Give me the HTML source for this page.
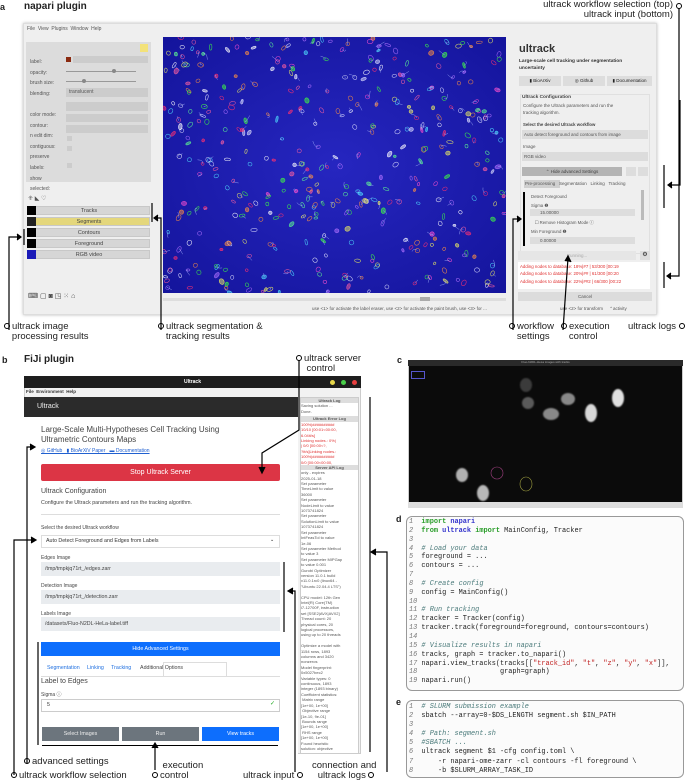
<!DOCTYPE html>
<html><head><meta charset="utf-8"><style>
*{margin:0;padding:0;box-sizing:border-box}
body{width:685px;height:781px;background:#fff;position:relative;overflow:hidden;font-family:"Liberation Sans",sans-serif;color:#222}
.a{position:absolute}
.t{position:absolute;white-space:nowrap}
.lbl{font-size:9.5px;color:#222;line-height:10px}
.np{font-size:5px;color:#555}
.row{position:absolute;left:28px;width:122px;height:9px;background:#d6d6d6;border:1px solid #c8c8c8;font-size:5.5px;text-align:center;line-height:8px;color:#444}
.thumb{position:absolute;left:-2px;top:-1px;width:9px;height:9px;background:#000}
.code{font-family:"Liberation Mono",monospace;font-size:6.9px;line-height:8.85px;white-space:pre;color:#222}
.ln{color:#777;font-style:italic}
.kw{color:#2a9d2a;font-weight:bold}
.kb{color:#3333cc;font-weight:bold}
.cm{color:#4a7a7a;font-style:italic}
.st{color:#c02020}
.circ{display:inline-block;width:6px;height:6px;border:1.3px solid #000;border-radius:50%;margin-right:2px;vertical-align:0}
</style></head><body>

<div class="t" style="left:0;top:2px;font-size:9px;font-weight:bold">a</div>
<div class="t" style="left:24px;top:1px;font-size:10px;font-weight:bold">napari plugin</div>
<div class="t lbl" style="right:12px;top:0;text-align:right">ultrack workflow selection (top)<br>ultrack input (bottom)</div>
<div class="a circ" style="left:676px;top:3px"></div>

<div class="a" style="left:23px;top:23px;width:634px;height:292px;background:#efefef;border:1px solid #ddd;box-shadow:0 0 3px #bbb"></div>
<div class="t np" style="left:27px;top:26px">File &nbsp;View &nbsp;Plugins &nbsp;Window &nbsp;Help</div>
<div class="a" style="left:26px;top:42px;width:125px;height:140px;background:#dcdcdc"></div>
<div class="a" style="left:140px;top:44px;width:8px;height:8px;background:#f3e27a"></div>
<div class="t np" style="left:30px;top:57px;line-height:10.6px">label:<br>opacity:<br>brush size:<br>blending:<br><br>color mode:<br>contour:<br>n edit dim:<br>contiguous:<br>preserve<br>labels:<br>show<br>selected:</div>
<div class="a" style="left:66px;top:57px;width:5px;height:5px;background:#8a2a10"></div>
<div class="a" style="left:73px;top:56px;width:75px;height:7px;background:#ccc"></div>
<div class="a" style="left:66px;top:71px;width:70px;height:1px;background:#999"></div>
<div class="a" style="left:112px;top:69px;width:4px;height:4px;border-radius:50%;background:#888"></div>
<div class="a" style="left:66px;top:81px;width:70px;height:1px;background:#999"></div>
<div class="a" style="left:82px;top:79px;width:4px;height:4px;border-radius:50%;background:#888"></div>
<div class="a" style="left:66px;top:88px;width:82px;height:9px;background:#ccc;font-size:5px;color:#555;padding-left:3px;line-height:9px">translucent</div>
<div class="a" style="left:66px;top:102px;width:82px;height:9px;background:#ccc"></div>
<div class="a" style="left:66px;top:114px;width:82px;height:8px;background:#ccc"></div>
<div class="a" style="left:66px;top:125px;width:82px;height:8px;background:#ccc"></div>
<div class="a" style="left:67px;top:136px;width:5px;height:5px;background:#ccc"></div>
<div class="a" style="left:67px;top:146px;width:5px;height:5px;background:#ccc"></div>
<div class="a" style="left:67px;top:163px;width:5px;height:5px;background:#ccc"></div>
<div class="a" style="left:28px;top:195px;width:30px;height:6px;font-size:6px;color:#555">⁜ ◣ ♡</div>
<div class="row" style="top:206px"><div class="thumb"></div>Tracks</div>
<div class="row" style="top:217px;background:#e4d77c"><div class="thumb" style="background:#222"></div>Segments</div>
<div class="row" style="top:228px"><div class="thumb"></div>Contours</div>
<div class="row" style="top:239px"><div class="thumb"></div>Foreground</div>
<div class="row" style="top:250px"><div class="thumb" style="background:#1a1ab8"></div>RGB video</div>
<div class="t" style="left:28px;top:292px;font-size:7px;color:#444">⌨ ▢ ◙ ◳ ⁙ ⌂</div>

<svg class="a" style="left:163px;top:37px" width="343" height="256" id="cv">
<defs><radialGradient id="bg" cx="50%" cy="50%" r="70%"><stop offset="0" stop-color="#2626c0"/><stop offset="1" stop-color="#14149c"/></radialGradient></defs>
<rect width="343" height="256" fill="url(#bg)"/></svg>
<div class="a" style="left:163px;top:298px;width:343px;height:3px;background:#ddd"></div>
<div class="a" style="left:420px;top:297px;width:10px;height:4px;background:#aaa"></div>
<div class="t np" style="left:312px;top:306px;font-size:4.5px">use &lt;1&gt; for activate the label eraser, use &lt;2&gt; for activate the paint brush, use &lt;3&gt; for ...</div>
<div class="t np" style="left:560px;top:306px;font-size:4.5px">use &lt;2&gt; for transform &nbsp; &nbsp; ⌃activity</div>

<div class="t" style="left:519px;top:43px;font-size:11px;font-weight:bold;color:#333">ultrack</div>
<div class="t" style="left:519px;top:59px;font-size:4.8px;font-weight:bold;color:#333;line-height:6.5px">Large-scale cell tracking under segmentation<br>uncertainty</div>
<div class="a" style="left:519px;top:76px;width:42px;height:10px;background:#ddd;font-size:4.5px;text-align:center;line-height:10px">▮ BioArXiv</div>
<div class="a" style="left:563px;top:76px;width:42px;height:10px;background:#ddd;font-size:4.5px;text-align:center;line-height:10px">◎ Github</div>
<div class="a" style="left:607px;top:76px;width:45px;height:10px;background:#ddd;font-size:4.5px;text-align:center;line-height:10px">▮ Documentation</div>
<div class="a" style="left:520px;top:94px;width:130px;height:160px;border:1px solid #e0e0e0"></div>
<div class="t" style="left:522px;top:95px;font-size:4.8px;font-weight:bold;color:#444">Ultrack Configuration</div>
<div class="t np" style="left:523px;top:103px;line-height:6.5px;font-size:4.5px">Configure the Ultrack parameters and run the<br>tracking algorithm.</div>
<div class="t" style="left:523px;top:122px;font-size:4.3px;font-weight:bold;color:#444">Select the desired Ultrack workflow</div>
<div class="a" style="left:522px;top:130px;width:126px;height:9px;background:#dcdcdc;font-size:4.5px;color:#555;padding-left:2px;line-height:9px">Auto detect foreground and contours from image</div>
<div class="t np" style="left:523px;top:144px;font-size:4.5px">Image</div>
<div class="a" style="left:522px;top:152px;width:126px;height:9px;background:#dcdcdc;font-size:4.5px;color:#555;padding-left:2px;line-height:9px">RGB video</div>
<div class="a" style="left:522px;top:167px;width:100px;height:9px;background:#b4b4b4;font-size:4.5px;color:#444;text-align:center;line-height:9px">⌃ Hide advanced Settings</div>
<div class="a" style="left:626px;top:167px;width:10px;height:9px;background:#ddd"></div>
<div class="a" style="left:638px;top:167px;width:10px;height:9px;background:#ddd"></div>
<div class="a" style="left:524px;top:180px;width:36px;height:8px;background:#cfcfcf"></div>
<div class="t np" style="left:525px;top:181px;font-size:4.5px">Pre-processing &nbsp; Segmentation &nbsp; Linking &nbsp; Tracking</div>
<div class="a" style="left:523px;top:192px;width:2px;height:54px;background:#000"></div>
<div class="t np" style="left:531px;top:193px;font-size:4.3px;line-height:8.8px">Detect Foreground<br>Sigma ❶<br><br>&nbsp;&nbsp;&nbsp;☐ Remove Histogram Mode ⓘ<br>Min Foreground ❶</div>
<div class="a" style="left:530px;top:209px;width:105px;height:7px;background:#ddd;font-size:4.5px;color:#555;padding-left:10px;line-height:7px">15.00000</div>
<div class="a" style="left:530px;top:237px;width:105px;height:7px;background:#ddd;font-size:4.5px;color:#555;padding-left:10px;line-height:7px">0.00000</div>
<div class="a" style="left:641px;top:190px;width:3px;height:30px;background:#bbb"></div>
<div class="a" style="left:518px;top:251px;width:118px;height:9px;background:#e6e6e6;font-size:4.5px;color:#aaa;text-align:center;line-height:9px">Running...</div>
<div class="a" style="left:640px;top:251px;width:10px;height:9px;background:#ddd;font-size:6px;text-align:center;line-height:9px">⚙</div>
<div class="a" style="left:518px;top:262px;width:132px;height:27px;background:#fff;font-size:4.4px;color:#e03030;line-height:7.4px;padding:1px 2px;overflow:hidden">Adding nodes to database: 18%|#7 | 53/300 [00:19<br>Adding nodes to database: 20%|## | 61/300 [00:20<br>Adding nodes to database: 22%|##2 | 66/300 [00:22</div>
<div class="a" style="left:518px;top:292px;width:134px;height:9px;background:#dcdcdc;font-size:4.5px;color:#555;text-align:center;line-height:9px">Cancel</div>

<svg class="a" style="left:0;top:0" width="685" height="340" fill="none" stroke="#000" stroke-width="1.2">
<path d="M9 330 V237 H20"/><path d="M17 234 L21 237 L17 240" fill="#000"/>
<path d="M24 229 V245"/><path d="M152 203 V222"/>
<path d="M161 330 V218 H155"/><path d="M158 215 L154 218 L158 221" fill="#000"/>
<path d="M513 330 V219 H520"/><path d="M517 216 L521 219 L517 222" fill="#000"/>
<path d="M563 330 L568 258"/><path d="M565 261 L568 256 L571 262" fill="#000"/>
<path d="M679 8 V276 H668"/><path d="M671 273 L667 276 L671 279" fill="#000"/>
<path d="M664 262 V288"/><path d="M680 100 V185 H669"/><path d="M672 182 L668 185 L672 188" fill="#000"/><path d="M664 165 V208"/>
</svg>
<div class="t lbl" style="left:4px;top:322px"><span class="circ"></span>ultrack image<br>&nbsp;&nbsp;&nbsp;processing results</div>
<div class="t lbl" style="left:158px;top:322px"><span class="circ"></span>ultrack segmentation &amp;<br>&nbsp;&nbsp;&nbsp;tracking results</div>
<div class="t lbl" style="left:509px;top:322px"><span class="circ"></span>workflow<br>&nbsp;&nbsp;&nbsp;settings</div>
<div class="t lbl" style="left:561px;top:322px"><span class="circ"></span>execution<br>&nbsp;&nbsp;&nbsp;control</div>
<div class="t lbl" style="left:628px;top:322px">ultrack logs <span class="circ"></span></div>

<div class="t" style="left:2px;top:355px;font-size:9px;font-weight:bold">b</div>
<div class="t" style="left:24px;top:354px;font-size:10px;font-weight:bold">FiJi plugin</div>
<div class="a" style="left:24px;top:376px;width:337px;height:378px;background:#f2f2f2;border:1px solid #ccc"></div>
<div class="a" style="left:24px;top:376px;width:337px;height:12px;background:#1e1e1e;color:#fff;font-size:5px;font-weight:bold;text-align:center;line-height:12px">Ultrack</div>
<div class="a" style="left:330px;top:380px;width:5px;height:5px;border-radius:50%;background:#e8d84a"></div>
<div class="a" style="left:341px;top:380px;width:5px;height:5px;border-radius:50%;background:#4ad04a"></div>
<div class="a" style="left:352px;top:380px;width:5px;height:5px;border-radius:50%;background:#e84040"></div>
<div class="t" style="left:26px;top:389px;font-size:4.5px;font-weight:bold;color:#333">File &nbsp;Environment &nbsp;Help</div>
<div class="a" style="left:24px;top:397px;width:274px;height:357px;background:#fff"></div>
<div class="a" style="left:24px;top:397px;width:274px;height:20px;background:#2b2b2b;color:#eee;font-size:7px;padding-left:13px;line-height:20px">Ultrack</div>
<div class="t" style="left:41px;top:425px;font-size:8px;color:#444;line-height:9.6px">Large-Scale Multi-Hypotheses Cell Tracking Using<br>Ultrametric Contours Maps</div>
<div class="t" style="left:41px;top:448px;font-size:5px;color:#2060d0;text-decoration:underline">◎ GitHub &nbsp; ▮ BioArXiV Paper &nbsp; ▬ Documentation</div>
<div class="a" style="left:41px;top:464px;width:239px;height:17px;background:#dc3545;border-radius:2px;color:#fff;font-size:7px;text-align:center;line-height:17px">Stop Ultrack Server</div>
<div class="t" style="left:41px;top:488px;font-size:7px;color:#444">Ultrack Configuration</div>
<div class="t" style="left:41px;top:500px;font-size:5.3px;color:#444">Configure the Ultrack parameters and run the tracking algorithm.</div>
<div class="a" style="left:41px;top:514px;width:239px;height:1px;background:#ddd"></div>
<div class="t" style="left:41px;top:525px;font-size:5px;color:#444">Select the desired Ultrack workflow</div>
<div class="a" style="left:41px;top:535px;width:239px;height:13px;border:1px solid #ddd;font-size:5.3px;color:#333;padding-left:4px;line-height:11px">Auto Detect Foreground and Edges from Labels</div>
<div class="t" style="left:270px;top:537px;font-size:5px">⌄</div>
<div class="t" style="left:41px;top:555px;font-size:5px;color:#444">Edges Image</div>
<div class="a" style="left:41px;top:562px;width:239px;height:14px;background:#e9ecef;font-size:5.3px;color:#444;padding-left:4px;line-height:14px">/tmp/tmpkjq71rt_/edges.zarr</div>
<div class="t" style="left:41px;top:583px;font-size:5px;color:#444">Detection Image</div>
<div class="a" style="left:41px;top:590px;width:239px;height:14px;background:#e9ecef;font-size:5.3px;color:#444;padding-left:4px;line-height:14px">/tmp/tmpkjq71rt_/detection.zarr</div>
<div class="t" style="left:41px;top:611px;font-size:5px;color:#444">Labels Image</div>
<div class="a" style="left:41px;top:617px;width:239px;height:14px;background:#e9ecef;font-size:5.3px;color:#444;padding-left:4px;line-height:14px">/datasets/Fluo-N2DL-HeLa-label.tiff</div>
<div class="a" style="left:41px;top:642px;width:239px;height:14px;background:#0d6efd;color:#fff;font-size:5.3px;text-align:center;line-height:14px">Hide Advanced Settings</div>
<div class="a" style="left:163px;top:662px;width:64px;height:14px;border:1px solid #ddd;border-bottom:none"></div>
<div class="a" style="left:41px;top:676px;width:239px;height:1px;background:#ddd"></div>
<div class="t" style="left:47px;top:665px;font-size:5.3px;color:#2070e0">Segmentation &nbsp; &nbsp; Linking &nbsp; &nbsp; Tracking &nbsp; &nbsp; &nbsp;<span style="color:#444">Additional Options</span></div>
<div class="t" style="left:41px;top:678px;font-size:7px;color:#444">Label to Edges</div>
<div class="t" style="left:41px;top:691px;font-size:5px;color:#444">Sigma ⓘ</div>
<div class="a" style="left:41px;top:699px;width:239px;height:13px;border:1px solid #ccc;font-size:5.3px;color:#333;padding-left:5px;line-height:11px">5</div>
<div class="t" style="left:270px;top:700px;font-size:6px;color:#2a2">✓</div>
<div class="a" style="left:42px;top:727px;width:77px;height:14px;background:#6c757d;color:#eee;font-size:5.3px;text-align:center;line-height:14px">Select Images</div>
<div class="a" style="left:122px;top:727px;width:77px;height:14px;background:#6c757d;color:#eee;font-size:5.3px;text-align:center;line-height:14px">Run</div>
<div class="a" style="left:202px;top:727px;width:77px;height:14px;background:#0d6efd;color:#fff;font-size:5.3px;text-align:center;line-height:14px">View tracks</div>
<div class="a" style="left:42px;top:745px;width:236px;height:1px;background:#000"></div>
<div class="a" style="left:300px;top:397px;width:59px;height:357px;background:#eee;border:1px solid #ccc;overflow:hidden;font-size:4px;line-height:5.4px;color:#555">
<div style="text-align:center;font-weight:bold;background:#ddd">Ultrack Log</div>
<div style="background:#fff;height:13px">Saving solution ...<br>Done.</div>
<div style="text-align:center;font-weight:bold;background:#ddd">Ultrack Error Log</div>
<div style="background:#fff;color:#e03030;height:43px">100%|##########<br>10/10 [00:01&lt;00:00,<br>6.04it/s]<br>Linking nodes.: 0%|<br>| 0/0 [00:00&lt;?,<br>?it/s]Linking nodes.:<br>100%|##########<br>0/0 [00:00&lt;00:00,</div>
<div style="text-align:center;font-weight:bold;background:#ddd">Server API Log</div>
<div style="background:#fff;height:300px">only - expires<br>2025-01-18<br>Set parameter<br>TimeLimit to value<br>36000<br>Set parameter<br>NodeLimit to value<br>1073741824<br>Set parameter<br>SolutionLimit to value<br>1073741824<br>Set parameter<br>IntFeasTol to value<br>1e-06<br>Set parameter Method<br>to value 3<br>Set parameter MIPGap<br>to value 0.001<br>Gurobi Optimizer<br>version 11.0.1 build<br>v11.0.1rc0 (linux64 -<br>"Ubuntu 22.04.4 LTS")<br><br>CPU model: 12th Gen<br>Intel(R) Core(TM)<br>i7-12700F, instruction<br>set [SSE2|AVX|AVX2]<br>Thread count: 20<br>physical cores, 20<br>logical processors,<br>using up to 20 threads<br><br>Optimize a model with<br>1154 rows, 1893<br>columns and 3420<br>nonzeros<br>Model fingerprint:<br>0x5027bec2<br>Variable types: 0<br>continuous, 1893<br>integer (1893 binary)<br>Coefficient statistics:<br>&nbsp;Matrix range<br>[1e+00, 1e+00]<br>&nbsp;Objective range<br>[1e-10, 9e-01]<br>&nbsp;Bounds range<br>[1e+00, 1e+00]<br>&nbsp;RHS range<br>[1e+00, 1e+00]<br>Found heuristic<br>solution: objective</div>
</div>
<svg class="a" style="left:0;top:340px" width="400" height="441" fill="none" stroke="#000" stroke-width="1.2">
<path d="M299 20 V90 L262 113 V130"/><path d="M259 127 L262 133 L265 127" fill="#000"/>
<path d="M14 435 V200 H34"/><path d="M31 197 L36 200 L31 203" fill="#000"/>
<path d="M27 423 V107 H33"/><path d="M30 104 L35 107 L30 110" fill="#000"/>
<path d="M38 302 V405"/>
<path d="M155 430 V405"/><path d="M152 408 L155 403 L158 408" fill="#000"/>
<path d="M295 432 V251 H290"/><path d="M293 248 L288 251 L293 254" fill="#000"/>
<path d="M284 222 V292"/>
<path d="M387 432 V212 H373"/><path d="M376 209 L371 212 L376 215" fill="#000"/>
<path d="M370 57 V412"/>
</svg>
<div class="t lbl" style="left:296px;top:354px"><span class="circ"></span>ultrack server<br>&nbsp;&nbsp;&nbsp;&nbsp;control</div>
<div class="t lbl" style="left:24px;top:757px"><span class="circ"></span>advanced settings</div>
<div class="t lbl" style="left:11px;top:771px"><span class="circ"></span>ultrack workflow selection</div>
<div class="t lbl" style="left:152px;top:761px">&nbsp;&nbsp;&nbsp;&nbsp;execution<br><span class="circ"></span>control</div>
<div class="t lbl" style="left:243px;top:771px">ultrack input <span class="circ"></span></div>
<div class="t lbl" style="left:312px;top:761px;text-align:right">connection and<br>ultrack logs <span class="circ"></span></div>

<div class="t" style="left:397px;top:355px;font-size:9px;font-weight:bold">c</div>
<div class="a" style="left:408px;top:360px;width:275px;height:148px;background:#0b0b0b;border:1px solid #ccc"></div>
<div class="a" style="left:408px;top:360px;width:275px;height:6px;background:#2a2a2a;color:#aaa;font-size:3px;text-align:center">Fluo-N2DL-HeLa images with tracks</div>
<div class="a" style="left:411px;top:371px;width:14px;height:8px;border:1px solid #5555cc"></div>
<svg class="a" style="left:408px;top:366px" width="275" height="136">
<defs><filter id="bl"><feGaussianBlur stdDeviation="0.8"/></filter></defs>
<g filter="url(#bl)">
<ellipse cx="118" cy="19" rx="6" ry="7" fill="#3a3a3a"/>
<ellipse cx="120" cy="37" rx="6" ry="6" fill="#5a5a5a"/>
<ellipse cx="160" cy="33" rx="7" ry="6" fill="#888"/>
<ellipse cx="143" cy="48" rx="8" ry="6" fill="#888"/>
<ellipse cx="183" cy="47" rx="6" ry="9" fill="#d8d8d8"/>
<ellipse cx="210" cy="32" rx="6" ry="9" fill="#e0e0e0"/>
<ellipse cx="54" cy="109" rx="6" ry="7" fill="#b0b0b0"/>
<ellipse cx="75" cy="127" rx="6" ry="8" fill="#b8b8b8"/></g>
<ellipse cx="89" cy="107" rx="6" ry="6" fill="none" stroke="#a04080" stroke-width=".6"/>
<ellipse cx="118" cy="118" rx="6" ry="7" fill="none" stroke="#a0a040" stroke-width=".6"/>
</svg>
<div class="a" style="left:408px;top:502px;width:275px;height:6px;background:#ddd"></div>

<div class="t" style="left:396px;top:514px;font-size:9px;font-weight:bold">d</div>
<div class="a" style="left:406px;top:516px;width:278px;height:175px;border:1px solid #999;border-radius:6px;background:#fbfbfb"></div>
<div class="a code" style="left:409px;top:518px"><span class="ln">1</span>  <span class="kw">import</span> <span class="kb">napari</span>
<span class="ln">2</span>  <span class="kw">from</span> <span class="kb">ultrack</span> <span class="kw">import</span> MainConfig, Tracker
<span class="ln">3</span>
<span class="ln">4</span>  <span class="cm"># Load your data</span>
<span class="ln">5</span>  foreground = ...
<span class="ln">6</span>  contours = ...
<span class="ln">7</span>
<span class="ln">8</span>  <span class="cm"># Create config</span>
<span class="ln">9</span>  config = MainConfig()
<span class="ln">10</span>
<span class="ln">11</span> <span class="cm"># Run tracking</span>
<span class="ln">12</span> tracker = Tracker(config)
<span class="ln">13</span> tracker.track(foreground=foreground, contours=contours)
<span class="ln">14</span>
<span class="ln">15</span> <span class="cm"># Visualize results in napari</span>
<span class="ln">16</span> tracks, graph = tracker.to_napari()
<span class="ln">17</span> napari.view_tracks(tracks[[<span class="st">"track_id"</span>, <span class="st">"t"</span>, <span class="st">"z"</span>, <span class="st">"y"</span>, <span class="st">"x"</span>]],
<span class="ln">18</span>                    graph=graph)
<span class="ln">19</span> napari.run()</div>

<div class="t" style="left:396px;top:697px;font-size:9px;font-weight:bold">e</div>
<div class="a" style="left:406px;top:700px;width:278px;height:78px;border:1px solid #999;border-radius:6px;background:#fbfbfb"></div>
<div class="a code" style="left:409px;top:703px;line-height:9.1px"><span class="ln">1</span>  <span class="cm"># SLURM submission example</span>
<span class="ln">2</span>  sbatch --array=0-$DS_LENGTH segment.sh $IN_PATH
<span class="ln">3</span>
<span class="ln">4</span>  <span class="cm"># Path: segment.sh</span>
<span class="ln">5</span>  <span class="cm">#SBATCH ...</span>
<span class="ln">6</span>  ultrack segment $1 -cfg config.toml \
<span class="ln">7</span>      -r napari-ome-zarr -cl contours -fl foreground \
<span class="ln">8</span>      -b $SLURM_ARRAY_TASK_ID</div>

<script>
(function(){var s=document.getElementById('cv'),ns='http://www.w3.org/2000/svg',seed=7;
function r(){seed=(seed*16807)%2147483647;return seed/2147483647;}
var cols=['#ff4fd0','#ff3070','#f0f060','#60ff90','#50e0ff','#ffffff','#b070ff','#ff9040','#40ff40','#e0e0ff','#ff60a0'];
for(var i=0;i<420;i++){var e=document.createElementNS(ns,'ellipse');var c=cols[Math.floor(r()*cols.length)];
var x=(r()*343).toFixed(1),y=(r()*256).toFixed(1);
e.setAttribute('cx',x);e.setAttribute('cy',y);
e.setAttribute('rx',(1.4+r()*1.8).toFixed(1));e.setAttribute('ry',(1+r()*1.3).toFixed(1));
e.setAttribute('transform','rotate('+Math.floor(r()*180)+' '+x+' '+y+')');
e.setAttribute('fill',r()<0.3?c:'none');e.setAttribute('fill-opacity','0.5');e.setAttribute('stroke',c);e.setAttribute('stroke-width','0.6');e.setAttribute('stroke-opacity','0.85');s.appendChild(e);
if(r()<0.4){var l=document.createElementNS(ns,'path');
l.setAttribute('d','M'+x+' '+y+' q'+(r()*8-4).toFixed(1)+' '+(r()*8-4).toFixed(1)+' '+(r()*12-6).toFixed(1)+' '+(r()*12-6).toFixed(1));
l.setAttribute('stroke','#a8b8ff');l.setAttribute('stroke-width','0.4');l.setAttribute('fill','none');s.appendChild(l);}}
})();
</script>
</body></html>
